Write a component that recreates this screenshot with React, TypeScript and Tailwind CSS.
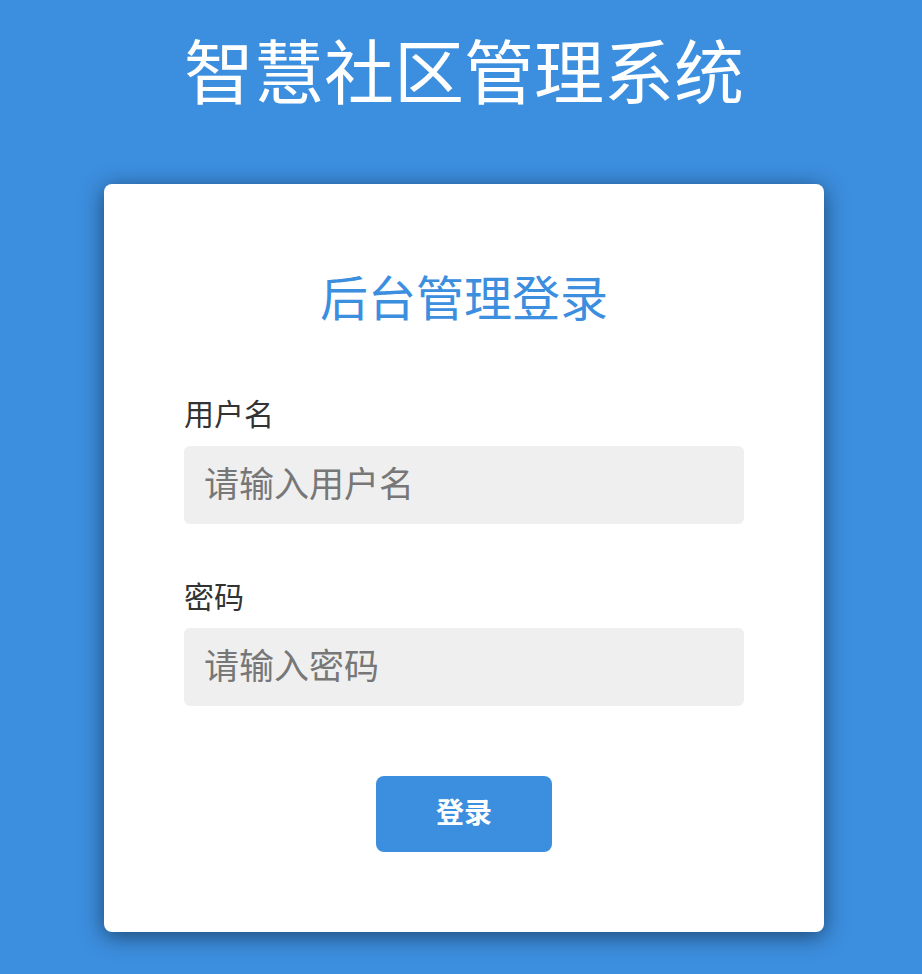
import { useState } from 'react'

const cjk = "font-['Liberation_Sans','Noto_Sans_CJK_SC',sans-serif]"

export default function App() {
  const [username, setUsername] = useState('')
  const [password, setPassword] = useState('')

  return (
    <div className={`${cjk} min-h-[974px] bg-[#3c8edf] flex flex-col items-center pl-[6px] pt-[40px] pb-10`}>
      <h1 className="text-[70px] leading-none text-white">智慧社区管理系统</h1>

      {/* login card */}
      <form
        onSubmit={(e) => e.preventDefault()}
        className="mt-[74px] w-[720px] rounded-lg bg-white px-20 pt-20 pb-20 shadow-[0_4px_22px_rgba(0,0,0,0.5)] flex flex-col"
      >
        <h2 className="text-center text-[48px] leading-[72px] text-[#3c8edf]">后台管理登录</h2>

        <label className="mt-[59px] text-[30px] leading-[40px] text-[#333]">用户名</label>
        <input
          value={username}
          onChange={(e) => setUsername(e.target.value)}
          placeholder="请输入用户名"
          className="mt-[11px] h-[78px] rounded-md bg-[#efefef] px-5 text-[35px] text-[#333] placeholder:text-[#777] outline-none"
        />

        <label className="mt-[54px] text-[30px] leading-[40px] text-[#333]">密码</label>
        <input
          type="password"
          value={password}
          onChange={(e) => setPassword(e.target.value)}
          placeholder="请输入密码"
          className="mt-[10px] h-[78px] rounded-md bg-[#efefef] px-5 text-[35px] text-[#333] placeholder:text-[#777] outline-none"
        />

        <button
          type="submit"
          className="mt-[70px] self-center h-[76px] w-[176px] rounded-lg bg-[#3c8edf] text-[28px] font-bold text-white"
        >
          登录
        </button>
      </form>
    </div>
  )
}
